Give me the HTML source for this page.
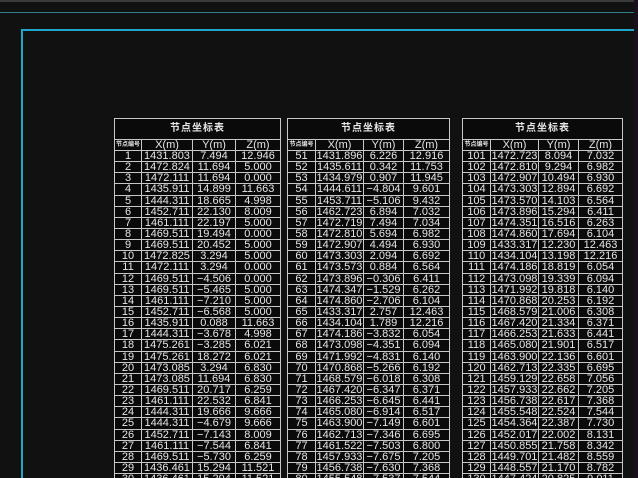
<!DOCTYPE html>
<html><head><meta charset="utf-8"><style>
html,body{margin:0;padding:0;width:638px;height:478px;overflow:hidden;background:#111111;position:relative;}
.top{position:absolute;left:0;top:0;width:638px;height:2px;background:#3a3a3a;}
.hl{position:absolute;left:0;top:12px;width:638px;height:1px;background:#2f7f8f;}
.frame{position:absolute;left:21px;top:29px;width:615px;height:449px;border-left:2px solid #1ea7c8;border-top:2px solid #1ea7c8;box-sizing:border-box;}
.edge{position:absolute;left:634px;top:0;width:4px;height:478px;background:#1a0f1c;}
table{position:absolute;top:118px;border-collapse:collapse;table-layout:fixed;font-family:"Liberation Sans","Noto Sans CJK SC",sans-serif;color:#e6e6e6;background:#0a0a0a;}
td{border:1px solid #c8c8c8;padding:0;text-align:center;font-size:11px;line-height:10px;height:10.15px;white-space:nowrap;overflow:hidden;}
td.t{height:20px;font-size:10px;font-weight:bold;letter-spacing:1px;}
tr.h td{height:10px;font-size:11px;}
tr.h td:first-child{font-size:6px;font-weight:bold;}
</style></head><body>
<div class="top"></div><div class="hl"></div><div class="frame"></div>

<table style="left:114px;width:166px">
<colgroup><col style="width:27px"><col style="width:51px"><col style="width:43px"><col style="width:45px"></colgroup>
<tr><td class="t" colspan="4">节点坐标表</td></tr>
<tr class="h"><td>节点编号</td><td>X(m)</td><td>Y(m)</td><td>Z(m)</td></tr>
<tr><td>1</td><td>1431.803</td><td>7.494</td><td>12.946</td></tr>
<tr><td>2</td><td>1472.824</td><td>11.694</td><td>5.000</td></tr>
<tr><td>3</td><td>1472.111</td><td>11.694</td><td>0.000</td></tr>
<tr><td>4</td><td>1435.911</td><td>14.899</td><td>11.663</td></tr>
<tr><td>5</td><td>1444.311</td><td>18.665</td><td>4.998</td></tr>
<tr><td>6</td><td>1452.711</td><td>22.130</td><td>8.009</td></tr>
<tr><td>7</td><td>1461.111</td><td>22.197</td><td>5.000</td></tr>
<tr><td>8</td><td>1469.511</td><td>19.494</td><td>0.000</td></tr>
<tr><td>9</td><td>1469.511</td><td>20.452</td><td>5.000</td></tr>
<tr><td>10</td><td>1472.825</td><td>3.294</td><td>5.000</td></tr>
<tr><td>11</td><td>1472.111</td><td>3.294</td><td>0.000</td></tr>
<tr><td>12</td><td>1469.511</td><td>−4.506</td><td>0.000</td></tr>
<tr><td>13</td><td>1469.511</td><td>−5.465</td><td>5.000</td></tr>
<tr><td>14</td><td>1461.111</td><td>−7.210</td><td>5.000</td></tr>
<tr><td>15</td><td>1452.711</td><td>−6.568</td><td>5.000</td></tr>
<tr><td>16</td><td>1435.911</td><td>0.088</td><td>11.663</td></tr>
<tr><td>17</td><td>1444.311</td><td>−3.678</td><td>4.998</td></tr>
<tr><td>18</td><td>1475.261</td><td>−3.285</td><td>6.021</td></tr>
<tr><td>19</td><td>1475.261</td><td>18.272</td><td>6.021</td></tr>
<tr><td>20</td><td>1473.085</td><td>3.294</td><td>6.830</td></tr>
<tr><td>21</td><td>1473.085</td><td>11.694</td><td>6.830</td></tr>
<tr><td>22</td><td>1469.511</td><td>20.717</td><td>6.259</td></tr>
<tr><td>23</td><td>1461.111</td><td>22.532</td><td>6.841</td></tr>
<tr><td>24</td><td>1444.311</td><td>19.666</td><td>9.666</td></tr>
<tr><td>25</td><td>1444.311</td><td>−4.679</td><td>9.666</td></tr>
<tr><td>26</td><td>1452.711</td><td>−7.143</td><td>8.009</td></tr>
<tr><td>27</td><td>1461.111</td><td>−7.544</td><td>6.841</td></tr>
<tr><td>28</td><td>1469.511</td><td>−5.730</td><td>6.259</td></tr>
<tr><td>29</td><td>1436.461</td><td>15.294</td><td>11.521</td></tr>
<tr><td>30</td><td>1436.461</td><td>15.294</td><td>11.521</td></tr>
</table>

<table style="left:287px;width:162px">
<colgroup><col style="width:28px"><col style="width:48px"><col style="width:40px"><col style="width:46px"></colgroup>
<tr><td class="t" colspan="4">节点坐标表</td></tr>
<tr class="h"><td>节点编号</td><td>X(m)</td><td>Y(m)</td><td>Z(m)</td></tr>
<tr><td>51</td><td>1431.896</td><td>6.226</td><td>12.916</td></tr>
<tr><td>52</td><td>1435.611</td><td>0.342</td><td>11.753</td></tr>
<tr><td>53</td><td>1434.979</td><td>0.907</td><td>11.945</td></tr>
<tr><td>54</td><td>1444.611</td><td>−4.804</td><td>9.601</td></tr>
<tr><td>55</td><td>1453.711</td><td>−5.106</td><td>9.432</td></tr>
<tr><td>56</td><td>1462.723</td><td>6.894</td><td>7.032</td></tr>
<tr><td>57</td><td>1472.719</td><td>7.494</td><td>7.034</td></tr>
<tr><td>58</td><td>1472.810</td><td>5.694</td><td>6.982</td></tr>
<tr><td>59</td><td>1472.907</td><td>4.494</td><td>6.930</td></tr>
<tr><td>60</td><td>1473.303</td><td>2.094</td><td>6.692</td></tr>
<tr><td>61</td><td>1473.573</td><td>0.884</td><td>6.564</td></tr>
<tr><td>62</td><td>1473.896</td><td>−0.306</td><td>6.411</td></tr>
<tr><td>63</td><td>1474.347</td><td>−1.529</td><td>6.262</td></tr>
<tr><td>64</td><td>1474.860</td><td>−2.706</td><td>6.104</td></tr>
<tr><td>65</td><td>1433.317</td><td>2.757</td><td>12.463</td></tr>
<tr><td>66</td><td>1434.104</td><td>1.789</td><td>12.216</td></tr>
<tr><td>67</td><td>1474.186</td><td>−3.832</td><td>6.054</td></tr>
<tr><td>68</td><td>1473.098</td><td>−4.351</td><td>6.094</td></tr>
<tr><td>69</td><td>1471.992</td><td>−4.831</td><td>6.140</td></tr>
<tr><td>70</td><td>1470.868</td><td>−5.266</td><td>6.192</td></tr>
<tr><td>71</td><td>1468.579</td><td>−6.018</td><td>6.308</td></tr>
<tr><td>72</td><td>1467.420</td><td>−6.347</td><td>6.371</td></tr>
<tr><td>73</td><td>1466.253</td><td>−6.645</td><td>6.441</td></tr>
<tr><td>74</td><td>1465.080</td><td>−6.914</td><td>6.517</td></tr>
<tr><td>75</td><td>1463.900</td><td>−7.149</td><td>6.601</td></tr>
<tr><td>76</td><td>1462.713</td><td>−7.346</td><td>6.695</td></tr>
<tr><td>77</td><td>1461.522</td><td>−7.503</td><td>6.800</td></tr>
<tr><td>78</td><td>1457.933</td><td>−7.675</td><td>7.205</td></tr>
<tr><td>79</td><td>1456.738</td><td>−7.630</td><td>7.368</td></tr>
<tr><td>80</td><td>1455.548</td><td>−7.537</td><td>7.544</td></tr>
</table>

<table style="left:462px;width:160px">
<colgroup><col style="width:28px"><col style="width:48px"><col style="width:40px"><col style="width:44px"></colgroup>
<tr><td class="t" colspan="4">节点坐标表</td></tr>
<tr class="h"><td>节点编号</td><td>X(m)</td><td>Y(m)</td><td>Z(m)</td></tr>
<tr><td>101</td><td>1472.723</td><td>8.094</td><td>7.032</td></tr>
<tr><td>102</td><td>1472.810</td><td>9.294</td><td>6.982</td></tr>
<tr><td>103</td><td>1472.907</td><td>10.494</td><td>6.930</td></tr>
<tr><td>104</td><td>1473.303</td><td>12.894</td><td>6.692</td></tr>
<tr><td>105</td><td>1473.570</td><td>14.103</td><td>6.564</td></tr>
<tr><td>106</td><td>1473.896</td><td>15.294</td><td>6.411</td></tr>
<tr><td>107</td><td>1474.351</td><td>16.516</td><td>6.263</td></tr>
<tr><td>108</td><td>1474.860</td><td>17.694</td><td>6.104</td></tr>
<tr><td>109</td><td>1433.317</td><td>12.230</td><td>12.463</td></tr>
<tr><td>110</td><td>1434.104</td><td>13.198</td><td>12.216</td></tr>
<tr><td>111</td><td>1474.186</td><td>18.819</td><td>6.054</td></tr>
<tr><td>112</td><td>1473.098</td><td>19.339</td><td>6.094</td></tr>
<tr><td>113</td><td>1471.992</td><td>19.818</td><td>6.140</td></tr>
<tr><td>114</td><td>1470.868</td><td>20.253</td><td>6.192</td></tr>
<tr><td>115</td><td>1468.579</td><td>21.006</td><td>6.308</td></tr>
<tr><td>116</td><td>1467.420</td><td>21.334</td><td>6.371</td></tr>
<tr><td>117</td><td>1466.253</td><td>21.633</td><td>6.441</td></tr>
<tr><td>118</td><td>1465.080</td><td>21.901</td><td>6.517</td></tr>
<tr><td>119</td><td>1463.900</td><td>22.136</td><td>6.601</td></tr>
<tr><td>120</td><td>1462.713</td><td>22.335</td><td>6.695</td></tr>
<tr><td>121</td><td>1459.129</td><td>22.658</td><td>7.056</td></tr>
<tr><td>122</td><td>1457.933</td><td>22.662</td><td>7.205</td></tr>
<tr><td>123</td><td>1456.738</td><td>22.617</td><td>7.368</td></tr>
<tr><td>124</td><td>1455.548</td><td>22.524</td><td>7.544</td></tr>
<tr><td>125</td><td>1454.364</td><td>22.387</td><td>7.730</td></tr>
<tr><td>126</td><td>1452.017</td><td>22.002</td><td>8.131</td></tr>
<tr><td>127</td><td>1450.855</td><td>21.758</td><td>8.342</td></tr>
<tr><td>128</td><td>1449.701</td><td>21.482</td><td>8.559</td></tr>
<tr><td>129</td><td>1448.557</td><td>21.170</td><td>8.782</td></tr>
<tr><td>130</td><td>1447.424</td><td>20.825</td><td>9.011</td></tr>
</table>
<div class="edge"></div>
</body></html>
